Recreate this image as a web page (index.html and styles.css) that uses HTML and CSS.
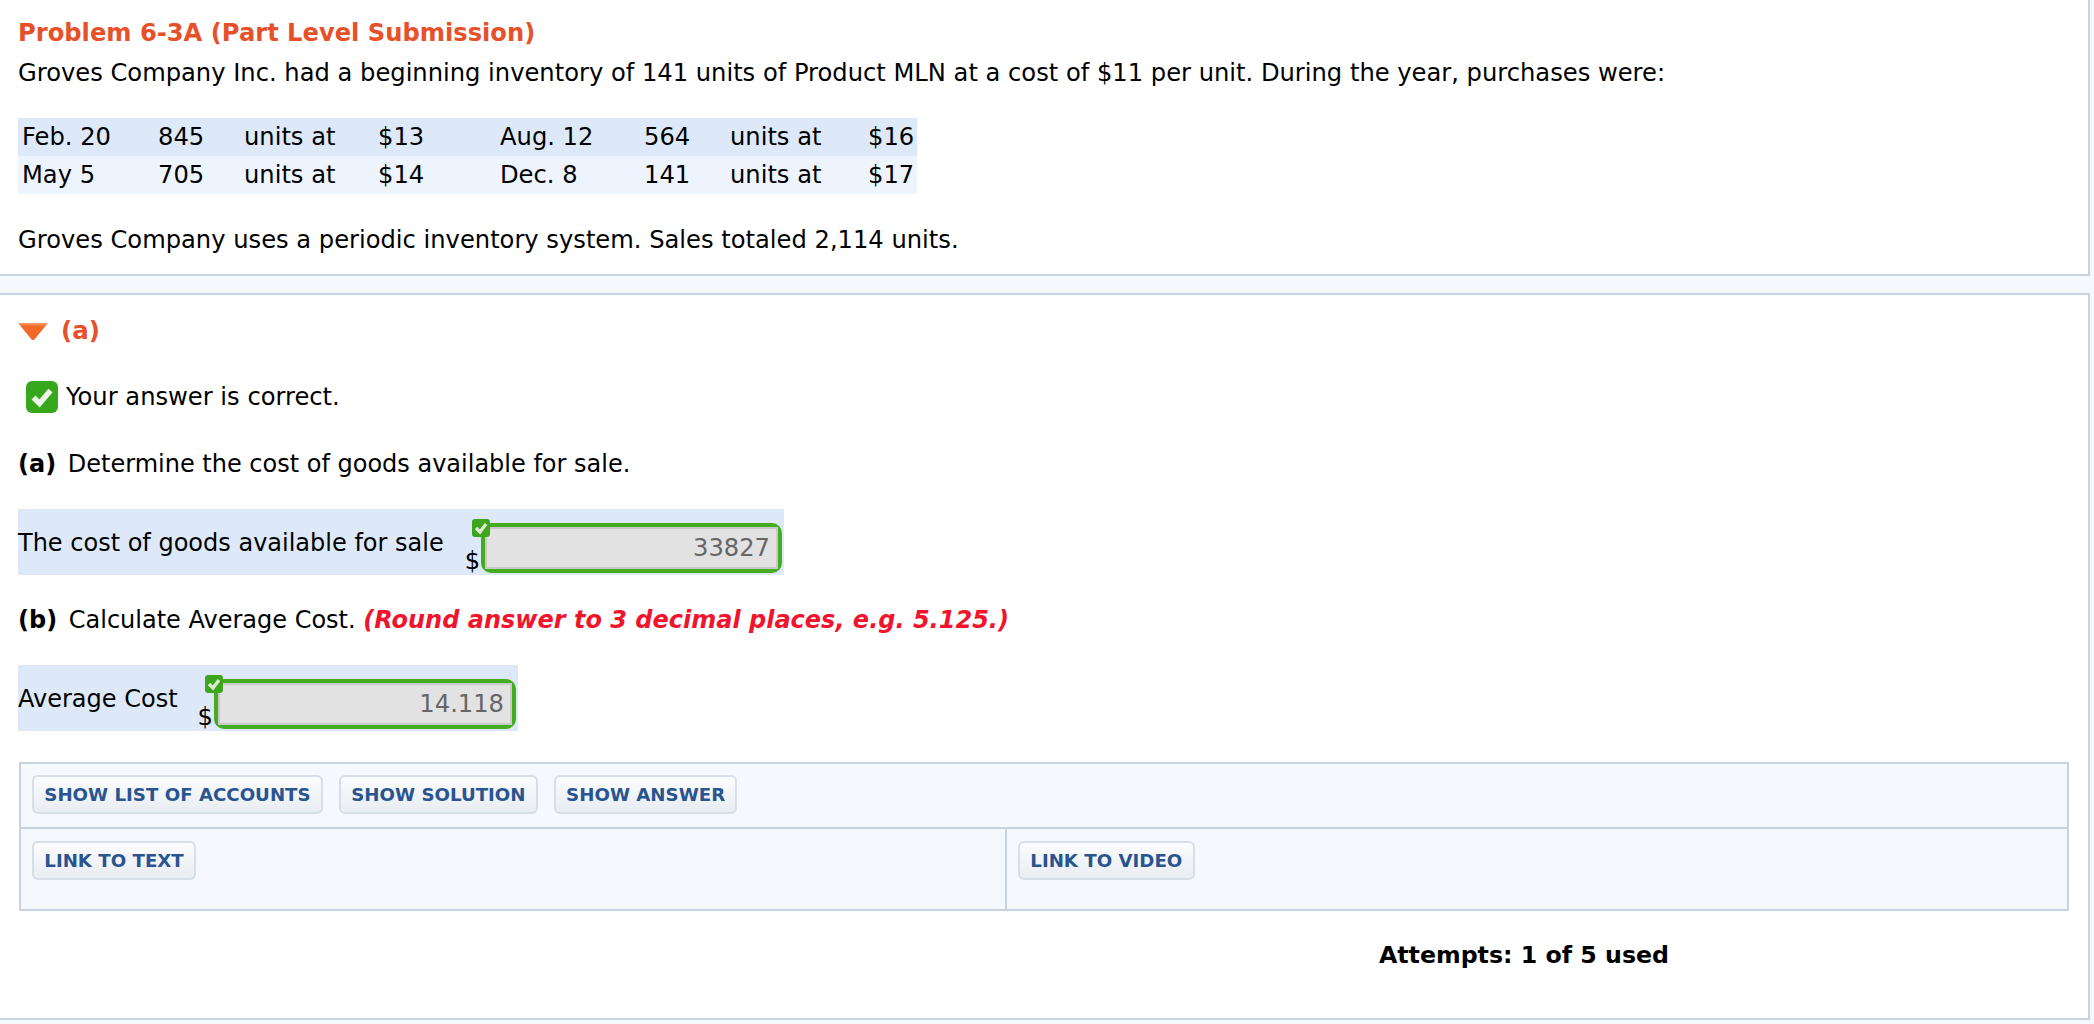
FILE: index.html
```html
<!DOCTYPE html>
<html>

<head>
  <title>Problem 6-3A (Part Level Submission)</title>
  <link rel="stylesheet" href="styles.css">
</head>

<body>
  <!-- Enunciado -->
  <div class="panel panel-intro">
    <h2 class="title">Problem 6-3A (Part Level Submission)</h2>
    <p class="text">Groves Company Inc. had a beginning inventory of 141 units of Product MLN at a cost of $11 per unit. During the year, purchases were:</p>
    <table class="purchases">
      <colgroup>
        <col class="c1"><col class="c2"><col class="c3"><col class="c4">
        <col class="c5"><col class="c6"><col class="c7"><col class="c8">
      </colgroup>
      <tr>
        <td>Feb. 20</td><td>845</td><td>units at</td><td>$13</td>
        <td>Aug. 12</td><td>564</td><td>units at</td><td>$16</td>
      </tr>
      <tr>
        <td>May 5</td><td>705</td><td>units at</td><td>$14</td>
        <td>Dec. 8</td><td>141</td><td>units at</td><td>$17</td>
      </tr>
    </table>
    <p class="text text-after-table">Groves Company uses a periodic inventory system. Sales totaled 2,114 units.</p>
  </div>

  <!-- Parte (a) -->
  <div class="panel panel-part">
    <h3 class="part-heading">
      <svg class="arrow" width="30" height="17" viewBox="0 0 30 17">
        <defs>
          <linearGradient id="arrow-fill" x1="0" y1="0" x2="0" y2="1">
            <stop offset="0" stop-color="#f8a070"/>
            <stop offset="0.2" stop-color="#f26a2a"/>
            <stop offset="1" stop-color="#f0662a"/>
          </linearGradient>
        </defs>
        <path d="M0 0H30L16 17H14Z" fill="url(#arrow-fill)"/>
      </svg>
      <span>(a)</span>
    </h3>

    <div class="correct-row">
      <svg class="check" width="32" height="32" viewBox="0 0 32 32">
        <rect width="32" height="32" rx="6" fill="#37a81c"/>
        <path d="M7.5 16.5L13.5 22.5L24.5 9.5" fill="none" stroke="#eef5e8" stroke-width="5.5"/>
      </svg>
      <span>Your answer is correct.</span>
    </div>

    <p class="text question"><b class="part-letter">(a)</b> Determine the cost of goods available for sale.</p>

    <div class="answer-box answer-wide">
      <span class="answer-label">The cost of goods available for sale</span>
      <span class="dollar">$</span>
      <div class="field">
        <svg class="badge" width="18" height="18" viewBox="0 0 18 18">
          <rect width="18" height="18" rx="3" fill="#3fa51f"/>
          <path d="M4 9L8 13L14 5" fill="none" stroke="#dcedd0" stroke-width="3.2"/>
        </svg>
        <div class="field-inner">33827</div>
      </div>
    </div>

    <p class="text question"><b class="part-letter">(b)</b> Calculate Average Cost. <b class="hint">(Round answer to 3 decimal places, e.g. 5.125.)</b></p>

    <div class="answer-box answer-narrow">
      <span class="answer-label">Average Cost</span>
      <span class="dollar">$</span>
      <div class="field">
        <svg class="badge" width="18" height="18" viewBox="0 0 18 18">
          <rect width="18" height="18" rx="3" fill="#3fa51f"/>
          <path d="M4 9L8 13L14 5" fill="none" stroke="#dcedd0" stroke-width="3.2"/>
        </svg>
        <div class="field-inner">14.118</div>
      </div>
    </div>

    <div class="actions">
      <div class="actions-top">
        <a class="btn">SHOW LIST OF ACCOUNTS</a>
        <a class="btn">SHOW SOLUTION</a>
        <a class="btn">SHOW ANSWER</a>
      </div>
      <div class="actions-left"><a class="btn">LINK TO TEXT</a></div>
      <div class="actions-right"><a class="btn">LINK TO VIDEO</a></div>
    </div>

    <p class="attempts">Attempts: 1 of 5 used</p>
  </div>
</body>

</html>
```

FILE: styles.css
```css
body {
  margin: 0;
  background-color: #f5f8fc;
  font-family: "DejaVu Sans", Verdana, sans-serif;
  font-size: 24.2px;
  line-height: 26px;
  color: #000;
}

/* Paneles */
.panel {
  background-color: #fff;
  border-right: 2px solid #c9d3df;
  border-bottom: 2px solid #c9d3df;
  box-sizing: content-box;
}

.panel-intro {
  padding: 20px 0 21px 18px;
  width: 2070px;
}

.panel-part {
  margin-top: 17px;
  border-top: 2px solid #c9d3df;
  padding: 23px 0 50px 18px;
  width: 2070px;
}

.title {
  margin: 0;
  font-size: 24.2px;
  line-height: 26px;
  color: #e6512a;
}

.text {
  margin: 14px 0 0;
}

.text-after-table {
  margin-top: 33px;
}

/* Tabla de compras */
.purchases {
  border-collapse: collapse;
  margin-top: 32px;
  table-layout: fixed;
  width: 899px;
}

.purchases td {
  padding: 0 0 0 4px;
  height: 38px;
  white-space: nowrap;
}

.purchases tr:nth-child(1) {
  background-color: #dde9f8;
}

.purchases tr:nth-child(2) {
  background-color: #eef4fe;
}

.c1 { width: 136px; }
.c2 { width: 86px; }
.c3 { width: 134px; }
.c4 { width: 122px; }
.c5 { width: 144px; }
.c6 { width: 86px; }
.c7 { width: 138px; }
.c8 { width: 53px; }

/* Parte (a) */
.part-heading {
  display: flex;
  align-items: center;
  gap: 13px;
  margin: 0;
  font-size: 24.5px;
  line-height: 26px;
  color: #e6512a;
}

.correct-row {
  display: flex;
  align-items: center;
  gap: 8px;
  margin: 37px 0 0 8px;
}

.question {
  margin-top: 38px;
  font-size: 24px;
}

.answer-box + .question {
  margin-top: 32px;
}

.part-letter {
  margin-right: 4px;
}

.hint {
  color: #f0142d;
  font-style: italic;
}

/* Cajas de respuesta */
.answer-box {
  display: flex;
  align-items: flex-end;
  height: 66px;
  margin-top: 32px;
  padding-bottom: 2px;
  box-sizing: border-box;
  background-color: #dde9f8;
}

.answer-wide {
  width: 766px;
}

.answer-narrow {
  width: 500px;
}

.answer-label {
  align-self: center;
  margin: 4px 21px 0 0;
  font-size: 24px;
}

.answer-narrow .answer-label {
  margin-right: 20px;
}

.dollar {
  width: 16px;
  margin-bottom: -1px;
}

.field {
  position: relative;
  flex: 1;
  height: 50px;
  margin-right: 2px;
  box-sizing: border-box;
  border: 4px solid #43ad1f;
  border-radius: 10px;
  background-color: #fff;
}

.field-inner {
  height: 100%;
  box-sizing: border-box;
  padding-right: 6px;
  border: 2px solid #c9c9c9;
  background-color: #e2e2e2;
  color: #666;
  text-align: right;
  line-height: 39px;
}

.badge {
  position: absolute;
  left: -13px;
  top: -8px;
}

/* Botones */
.actions {
  display: grid;
  grid-template-columns: 984px 1fr;
  grid-template-rows: 65px 80px;
  width: 2046px;
  margin: 31px 0 0 1px;
  border: 2px solid #c9d3df;
  background-color: #f5f8fc;
}

.actions-top {
  grid-column: 1 / 3;
  display: flex;
  gap: 16px;
  padding: 11px;
  border-bottom: 2px solid #c9d3df;
}

.actions-left {
  padding: 12px 11px;
}

.actions-right {
  padding: 12px 11px;
  border-left: 2px solid #c9d3df;
}

.btn {
  display: inline-block;
  height: 39px;
  box-sizing: border-box;
  padding: 0 10.3px;
  border: 2px solid #d6dee7;
  border-radius: 6px;
  background: linear-gradient(#fbfcfd, #e8edf2);
  color: #2a5490;
  font-size: 18.2px;
  font-weight: bold;
  line-height: 35px;
  white-space: nowrap;
}

.attempts {
  margin: 31px 419px 0 0;
  text-align: right;
  font-size: 23.7px;
  font-weight: bold;
}
```
